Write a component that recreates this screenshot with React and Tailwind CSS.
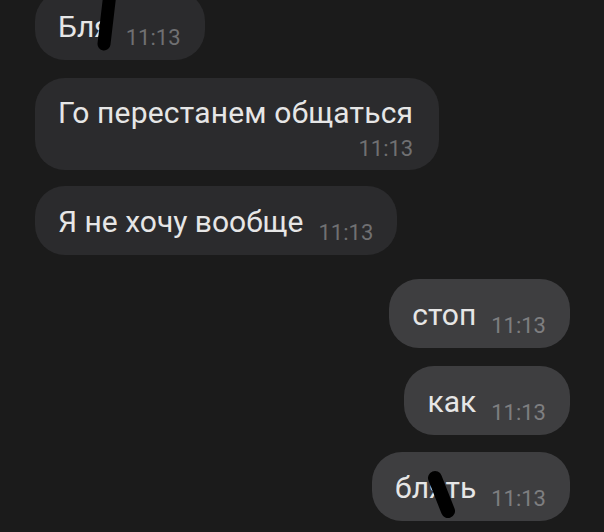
function Marker({ className, x1, y1, x2, y2, w = 13 }) {
  return (
    <svg className={`pointer-events-none absolute ${className}`} width="40" height="80" viewBox="0 0 40 80">
      <line x1={x1} y1={y1} x2={x2} y2={y2} stroke="#000" strokeWidth={w} strokeLinecap="round" />
    </svg>
  );
}

function Bubble({ text, right, className = '', children }) {
  return (
    <div
      className={`relative flex h-[69px] items-start rounded-[30px] pl-[23px] pr-[24px] ${
        right ? 'self-end bg-[#3e3e40]' : 'self-start bg-[#2b2b2d]'
      } ${className}`}
    >
      <span className="mt-[21px] text-[30px] leading-[30px] text-[#e6e6e6]">{text}</span>
      <span className={`ml-[15px] mt-[36px] text-[22px] leading-[22px] ${right ? 'text-[#7e7e80]' : 'text-[#707072]'}`}>
        11:13
      </span>
      {children}
    </div>
  );
}

export default function App() {
  return (
    <div
      className="h-[532px] w-[604px] overflow-hidden bg-[#1b1b1b]"
      style={{ fontFamily: 'Roboto, "Noto Sans", sans-serif' }}
    >
      <div className="flex flex-col pl-[35px] pr-[34px]">
        <Bubble text="Бля" className="-mt-[9px]">
          <Marker className="left-[54px] top-[0px]" x1="21" y1="2" x2="15" y2="53" w="13" />
        </Bubble>

        <div className="mt-[18px] flex flex-col self-start rounded-[30px] bg-[#2b2b2d] pb-[10px] pl-[23px] pr-[26px] pt-[20px]">
          <span className="text-[30px] leading-[30px] tracking-[0.2px] text-[#e6e6e6]">Го перестанем общаться</span>
          <span className="mt-[10px] self-end text-[22px] leading-[22px] text-[#707072]">11:13</span>
        </div>

        <Bubble text="Я не хочу вообще" className="mt-[16px]" />

        <Bubble text="стоп" right className="mt-[24px]" />
        <Bubble text="как" right className="mt-[18px]" />
        <Bubble text="блять" right className="mt-[17px]">
          <Marker className="left-[48px] top-[10px]" x1="15" y1="16" x2="28" y2="49" w="14" />
        </Bubble>
      </div>
    </div>
  );
}
